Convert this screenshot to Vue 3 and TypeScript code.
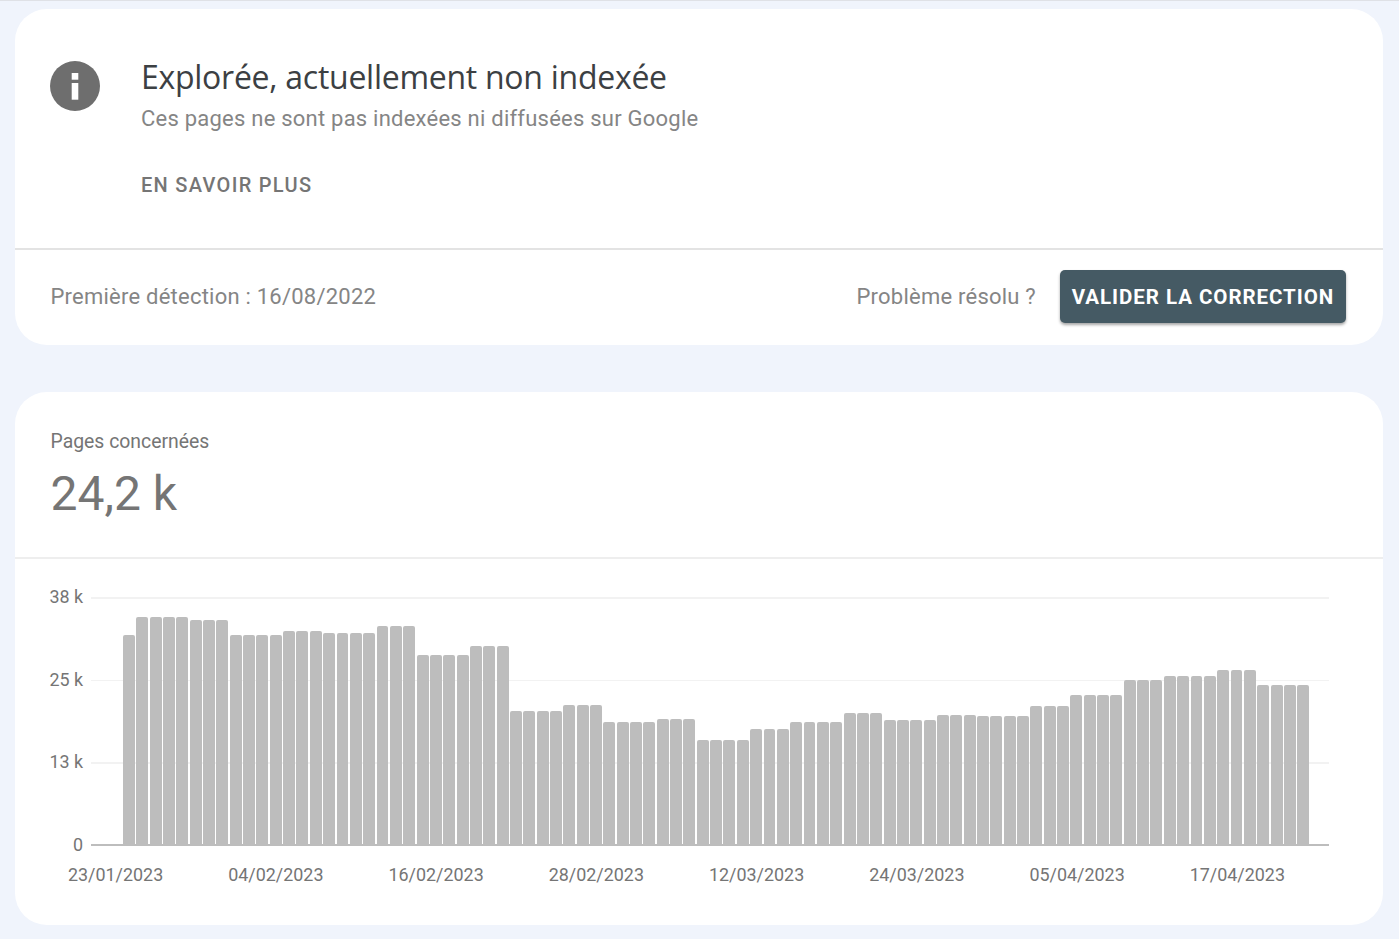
<template>
  <div class="page">
    <section class="card">
      <div class="issue">
        <svg class="issue-icon" viewBox="0 0 50 50" aria-hidden="true">
          <circle cx="25" cy="25" r="25" fill="#6e6e6e" />
          <rect x="21.7" y="22" width="6.6" height="16.7" fill="#fff" />
          <rect x="21.7" y="12" width="6.6" height="6.7" fill="#fff" />
        </svg>
        <div class="issue-text">
          <h1 class="issue-title">Explorée, actuellement non indexée</h1>
          <p class="issue-sub">Ces pages ne sont pas indexées ni diffusées sur Google</p>
          <a class="learn-more">EN SAVOIR PLUS</a>
        </div>
      </div>
      <div class="status">
        <span class="status-text">Première détection : 16/08/2022</span>
        <div class="status-right">
          <span class="status-text">Problème résolu ?</span>
          <button class="validate">VALIDER LA CORRECTION</button>
        </div>
      </div>
    </section>

    <section class="card chart-card">
      <div class="summary">
        <div class="summary-label">Pages concernées</div>
        <div class="summary-value">24,2 k</div>
      </div>
      <div class="chart">
        <div class="y-axis">
          <span v-for="t in yTicks" :key="t">{{ t }}</span>
        </div>
        <div class="plot">
          <div class="grid-line" v-for="n in 3" :key="n" :style="{ top: (n - 1) * 82.67 + 'px' }"></div>
          <div class="bars">
            <div v-for="(b, i) in bars" :key="i" class="bar" :style="{ height: b + 'px' }"></div>
          </div>
        </div>
        <div class="x-axis">
          <span v-for="d in xTicks" :key="d">{{ d }}</span>
        </div>
      </div>
    </section>
  </div>
</template>

<script setup lang="ts">
const yTicks = ['38 k', '25 k', '13 k', '0']
const xTicks = [
  '23/01/2023', '04/02/2023', '16/02/2023', '28/02/2023',
  '12/03/2023', '24/03/2023', '05/04/2023', '17/04/2023',
]

// [bar height in px above the baseline, number of days]
const groups: [number, number][] = [
  [209, 1], [227, 4], [224, 3], [209, 4], [213, 3], [211, 4], [218, 3], [189, 4], [198, 3],
  [133, 4], [139, 3], [122, 4], [125, 3], [104, 4], [115, 3], [122, 4], [131, 3], [124, 4],
  [129, 3], [128, 4], [138, 3], [149, 4], [164, 3], [168, 4], [174, 3], [159, 4],
]
const bars = groups.flatMap(([h, n]) => Array<number>(n).fill(h))
</script>

<style scoped>
.page {
  height: 939px;
  box-sizing: border-box;
  padding: 8px 16px 0 15px;
  border-top: 1px solid #dfe1e6;
  background: #f0f4fc;
  font-family: Roboto, "Liberation Sans", sans-serif;
  color: #757575;
  display: flex;
  flex-direction: column;
  gap: 47px;
}

.card {
  background: #fff;
  border-radius: 32px;
}

.issue {
  display: flex;
  height: 241px;
  box-sizing: border-box;
  padding: 52px 35px 0 34.5px;
  gap: 41.5px;
  border-bottom: 2px solid #e3e3e3;
}
.issue-icon {
  width: 50px;
  height: 50px;
  flex: none;
}
.issue-text {
  margin-top: -1px;
}
.issue-title {
  margin: 0;
  font-family: "Open Sans", sans-serif;
  font-size: 32px;
  line-height: 34px;
  font-weight: 400;
  letter-spacing: -0.27px;
  color: #3c4043;
}
.issue-sub {
  margin: 10px 0 0;
  font-size: 22px;
  line-height: 30px;
  font-weight: 400;
  letter-spacing: 0.23px;
  color: #858585;
}
.learn-more {
  display: block;
  margin-top: 39px;
  font-size: 20px;
  line-height: 24px;
  font-weight: 500;
  letter-spacing: 1.3px;
}

.status {
  display: flex;
  justify-content: space-between;
  align-items: center;
  height: 95px;
  box-sizing: border-box;
  padding: 0 37px 2px 35.5px;
}
.status-right {
  display: flex;
  align-items: center;
  gap: 24px;
}
.status-text {
  font-size: 22px;
  font-weight: 400;
  letter-spacing: 0.23px;
  color: #858585;
}
.validate {
  width: 286px;
  height: 53px;
  padding: 0;
  border: none;
  border-radius: 5px;
  background: #455a64;
  color: #fff;
  font-family: inherit;
  font-size: 20.5px;
  font-weight: 700;
  letter-spacing: 0.95px;
  box-shadow: 0 2px 3px rgba(0, 0, 0, 0.35);
}

.chart-card {
  height: 533px;
}
.summary {
  height: 167px;
  box-sizing: border-box;
  padding: 37px 36px 0 35.5px;
  border-bottom: 2px solid #eeeeee;
}
.summary-label {
  font-size: 19.4px;
  line-height: 26px;
}
.summary-value {
  margin-top: 10px;
  font-size: 48px;
  line-height: 58px;
}

.chart {
  display: grid;
  grid-template-columns: 68px 1238px;
  grid-template-rows: 248px auto;
  column-gap: 8px;
  padding: 38px 0 0 0;
  font-size: 17.9px;
}
.y-axis {
  display: flex;
  flex-direction: column;
  justify-content: space-between;
  align-items: flex-end;
  margin: -11px 0 -10px;
  line-height: 21px;
}
.plot {
  position: relative;
  border-bottom: 2px solid #bdbdbd;
  box-sizing: border-box;
  height: 249px;
  padding: 0 19.5px 0 32px;
  display: flex;
  align-items: flex-end;
}
.grid-line {
  position: absolute;
  left: 0;
  right: 0;
  height: 1.5px;
  background: #f2f2f2;
}
.bars {
  position: relative;
  flex: 1;
  display: flex;
  align-items: flex-end;
  gap: 1.4px;
}
.bar {
  flex: 1;
  background: #bdbdbd;
  border-radius: 2px 2px 0 0;
}
.x-axis {
  grid-column: 1 / 3;
  display: flex;
  justify-content: space-between;
  padding: 19px 44px 0 53px;
  line-height: 22px;
  color: #757575;
}
</style>

<style>
body {
  margin: 0;
  background: #f0f4fc;
}
</style>
